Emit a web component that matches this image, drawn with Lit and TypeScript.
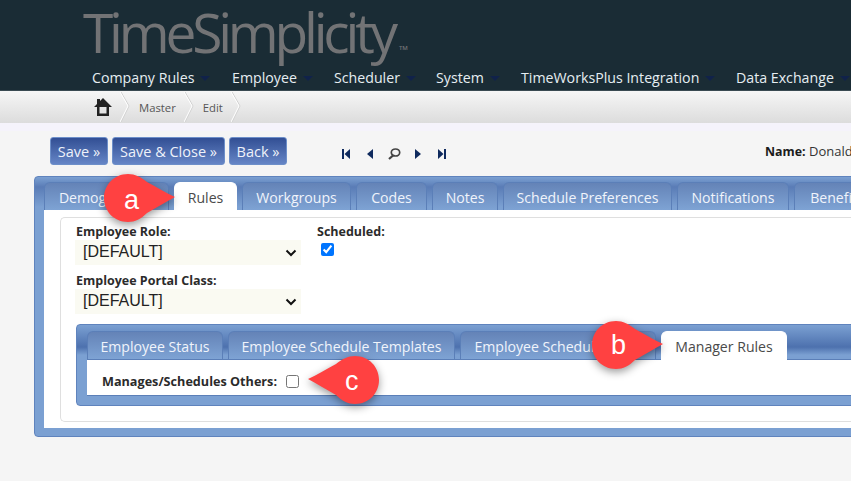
import { LitElement, html, css, svg } from "lit";
import { customElement } from "lit/decorators.js";

const NAV = ["Company Rules", "Employee", "Scheduler", "System", "TimeWorksPlus Integration", "Data Exchange"];
const NAV_W = [140, 102, 102, 85, 215, 115];
const TABS: [string, number, boolean][] = [
  ["Demographics", 125, false], ["Rules", 63, true], ["Workgroups", 109, false], ["Codes", 71, false],
  ["Notes", 66, false], ["Schedule Preferences", 169, false], ["Notifications", 112, false], ["Benefits", 86, false],
];
const SUB: [string, number, boolean][] = [
  ["Employee Status", 136, false], ["Employee Schedule Templates", 227, false],
  ["Employee Schedule Rules", 196, false], ["Manager Rules", 126, true],
];
const crumb = svg`<svg class="sep" width="10" height="30" viewBox="0 0 10 30"><path d="M1 0 L9 14 L1 30" fill="none" stroke="#cfcfcf" stroke-width="1"/><path d="M0 0 L8 14 L0 30" fill="none" stroke="#fff" stroke-width="1"/></svg>`;
const chev = svg`<svg class="chev" width="12" height="8" viewBox="0 0 12 8"><path d="M1.5 1.5 L6 6 L10.5 1.5" fill="none" stroke="#111" stroke-width="2"/></svg>`;

const drop = (dir: "r" | "l") => {
  const d = dir === "r"
    ? "M25 1 C32 1 38 4 44 9 C54 14 63 20 72 24 C63 29 54 34 44 40 C38 46 32 49 25 49 C11 49 1 38 1 25 C1 12 11 1 25 1 Z"
    : "M48 1 C41 1 35 4 29 9 C19 14 10 20 1 24 C10 29 19 34 29 40 C35 46 41 49 48 49 C62 49 72 38 72 25 C72 12 62 1 48 1 Z";
  return svg`<svg class="drop" width="80" height="60" viewBox="0 0 80 60"><path d=${d} fill="#ff4141"/></svg>`;
};

@customElement("app-root")
export class AppRoot extends LitElement {
  static styles = css`
    :host { display: block; width: 851px; height: 481px; overflow: hidden; position: relative; background: #f5f5f5;
      font-family: "Open Sans", "Noto Sans", sans-serif; color: #222; }
    .hdr { height: 91px; background: #1a2c35; box-sizing: border-box; padding-left: 83px; border-bottom: 1px solid #3a4a52; }
    .logo { height: 66px; font-family: "Open Sans", sans-serif; font-weight: 400; font-size: 55px; line-height: 64px; letter-spacing: -4.2px; color: #727375; white-space: nowrap; display: flex; }
    .logo sup { font-size: 6px; letter-spacing: 0; font-weight: 600; line-height: 1; margin: 45px 0 0 5px; }
    .nav { display: flex; padding-left: 9px; height: 22px; align-items: center; }
    .nav span { flex: none; display: flex; align-items: center; color: #e6eef2; font-size: 14.2px; white-space: nowrap; }
    .nav i { display: block; margin-left: 6px; margin-top: 3px; border: 5px solid transparent; border-top: 5px solid #10224a; border-bottom: 0; }
    .crumbs { height: 32px; background: linear-gradient(#f6f6f6, #dcdcdc); display: flex; align-items: center; padding-left: 93px; font-size: 11.3px; color: #565656; box-sizing: border-box; }
    .crumbs .sep { flex: none; }
    .crumbs .home { margin-right: 7px; }
    .crumbs b { font-weight: 400; padding: 0 8px 0 9px; }
    .strip { height: 8px; background: #f5f3fb; }
    .bar { display: flex; height: 45px; align-items: flex-start; padding: 6px 0 0 50px; box-sizing: border-box; }
    .btn { flex: none; height: 28px; box-sizing: border-box; margin-right: 4px; border: 1px solid #6d8fc9; border-radius: 3px; background: linear-gradient(#324f94, #6585c6); color: #eef2fa; font-size: 14.5px; line-height: 28px; text-align: center; white-space: nowrap; }
    .pager { flex: none; display: flex; align-items: center; height: 28px; margin: 3px 0 0 54px; }
    .pager svg { display: block; flex: none; }
    .name { flex: none; margin-left: 318px; font-size: 13px; line-height: 28px; white-space: nowrap; color: #333; }
    .name b { color: #1b1b1b; font-size: 12.4px; }
    .panel { background: #7ba0d2; border: 1px solid #5f83bd; border-radius: 4px; box-sizing: border-box; }
    .outer { margin-left: 34px; width: 900px; height: 261px; padding-top: 5px; background: linear-gradient(#7ba0d2, #5a7cb6 10px, #7ba0d2 30px); }
    .tabs { display: flex; gap: 5px; padding-left: 9px; height: 28px; }
    .tab { flex: none; box-sizing: border-box; border: 1px solid #5b7fb8; border-bottom: 0; border-radius: 6px 6px 0 0; background: linear-gradient(#6483b7, #7ea3d4); color: #f0f4fb; font-size: 14.1px; line-height: 29px; text-align: center; white-space: nowrap; }
    .tab.on { background: #fff; color: #4a4a4a; border-color: #fff; height: 30px; position: relative; }
    .body { background: #fff; margin-left: 9px; height: 218px; padding: 7px 0 0 16px; box-sizing: border-box; }
    .fs { height: 205px; box-sizing: border-box; border: 1px solid #dfdfdf; border-right: 0; border-radius: 5px 0 0 5px; padding: 6px 0 0 15px; }
    .form { display: flex; height: 100px; }
    .col1 { width: 241px; }
    label { display: block; font-weight: 700; font-size: 12.5px; line-height: 16px; color: #2b2b2b; white-space: nowrap; }
    .sel { position: relative; width: 226px; height: 25px; margin: 0 0 8px -1px; }
    select { display: block; appearance: none; width: 100%; height: 100%; border: 0; background: #fafaf2; font: 16px/24px "Liberation Sans", sans-serif; color: #222; padding: 0 0 1px 8px; border-radius: 0; }
    .chev { position: absolute; right: 4px; top: 9px; }
    .col2 input { display: block; margin: 3px 0 0 4px; width: 13px; height: 13px; }
    .sub { width: 800px; height: 82px; padding-top: 6px; background: linear-gradient(#7ba0d2, #4d71ae 22px, #7ba0d2 30px); }
    .tabs.s { padding-left: 10px; height: 28px; }
    .subbody { margin-left: 10px; height: 37px; background: #fff; border-top: 1px solid #5b7fb8; border-bottom: 1px solid #5b7fb8; box-sizing: border-box; display: flex; align-items: center; padding: 7px 0 0 15px; }
    .subbody label { font-size: 12.65px; }
    .subbody input { margin: 0 0 0 9px; width: 13px; height: 13px; }
    .drop { position: absolute; filter: drop-shadow(0 3px 4px rgba(0,0,0,.4)); }
    .ct { position: absolute; color: #fff; font-family: "Liberation Sans", sans-serif; font-size: 27px; line-height: 30px; }
    .pin { position: absolute; }
    .m15 { margin-left: 15px; }
    .m13 { margin-left: 13px; }
  `;

  private pager() {
    const c = "#0f2a5e";
    return html`
      <svg width="10" height="12" viewBox="0 0 10 12"><path d="M1 1h2v10H1z M9 1v10L3.5 6z" fill=${c}/></svg>
      <svg class="m15" width="8" height="12" viewBox="0 0 8 12"><path d="M7 1v10L1 6z" fill=${c}/></svg>
      <svg class="m13" width="14" height="14" viewBox="0 0 14 14"><ellipse cx="8.5" cy="5.5" rx="4.2" ry="3.5" fill="none" stroke="#444" stroke-width="1.7"/><path d="M6 8.5L2 12" stroke="#444" stroke-width="2.2"/></svg>
      <svg class="m13" width="8" height="12" viewBox="0 0 8 12"><path d="M1 1v10l6-5z" fill=${c}/></svg>
      <svg class="m15" width="10" height="12" viewBox="0 0 10 12"><path d="M1 1v10l5.5-5z M7 1h2v10H7z" fill=${c}/></svg>`;
  }

  render() {
    return html`
      <div class="hdr">
        <div class="logo">TimeSimplicity<sup>TM</sup></div>
        <div class="nav">${NAV.map((n, i) => html`<span style="width:${NAV_W[i]}px">${n}<i></i></span>`)}</div>
      </div>
      <div class="crumbs">
        <svg class="home" width="20" height="20" viewBox="0 0 20 20"><path d="M10 1 L19 10 H16 V19 H4 V10 H1 L4 7 V2 H7 V4 Z" fill="#222"/><path d="M6.5 10 H13.5 V16.5 H6.5 Z" fill="#e4e4e4"/></svg>
        ${crumb}<b>Master</b>${crumb}<b>Edit</b>${crumb}
      </div>
      <div class="strip"></div>
      <div class="bar">
        <div class="btn" style="width:58px">Save »</div>
        <div class="btn" style="width:113px">Save &amp; Close »</div>
        <div class="btn" style="width:58px;margin-right:0">Back »</div>
        <div class="pager">${this.pager()}</div>
        <div class="name"><b>Name:</b> Donald</div>
      </div>
      <div class="panel outer">
        <div class="tabs">${TABS.map(([t, w, on]) => html`<div class="tab ${on ? "on" : ""}" style="width:${w}px">${t}</div>`)}</div>
        <div class="body">
          <div class="fs">
            <div class="form">
              <div class="col1">
                <label>Employee Role:</label>
                <div class="sel"><select><option>[DEFAULT]</option></select>${chev}</div>
                <label>Employee Portal Class:</label>
                <div class="sel"><select><option>[DEFAULT]</option></select>${chev}</div>
              </div>
              <div class="col2">
                <label>Scheduled:</label>
                <input type="checkbox" checked />
              </div>
            </div>
            <div class="panel sub">
              <div class="tabs s">${SUB.map(([t, w, on]) => html`<div class="tab ${on ? "on" : ""}" style="width:${w}px">${t}</div>`)}</div>
              <div class="subbody"><label>Manages/Schedules Others:</label><input type="checkbox" /></div>
            </div>
          </div>
        </div>
      </div>
      <div class="pin" style="left:103px;top:173px">${drop("r")}</div>
      <div class="ct" style="left:124px;top:185px">a</div>
      <div class="pin" style="left:591px;top:320px">${drop("r")}</div>
      <div class="ct" style="left:611px;top:330px">b</div>
      <div class="pin" style="left:307px;top:355px">${drop("l")}</div>
      <div class="ct" style="left:345px;top:366px">c</div>
    `;
  }
}
